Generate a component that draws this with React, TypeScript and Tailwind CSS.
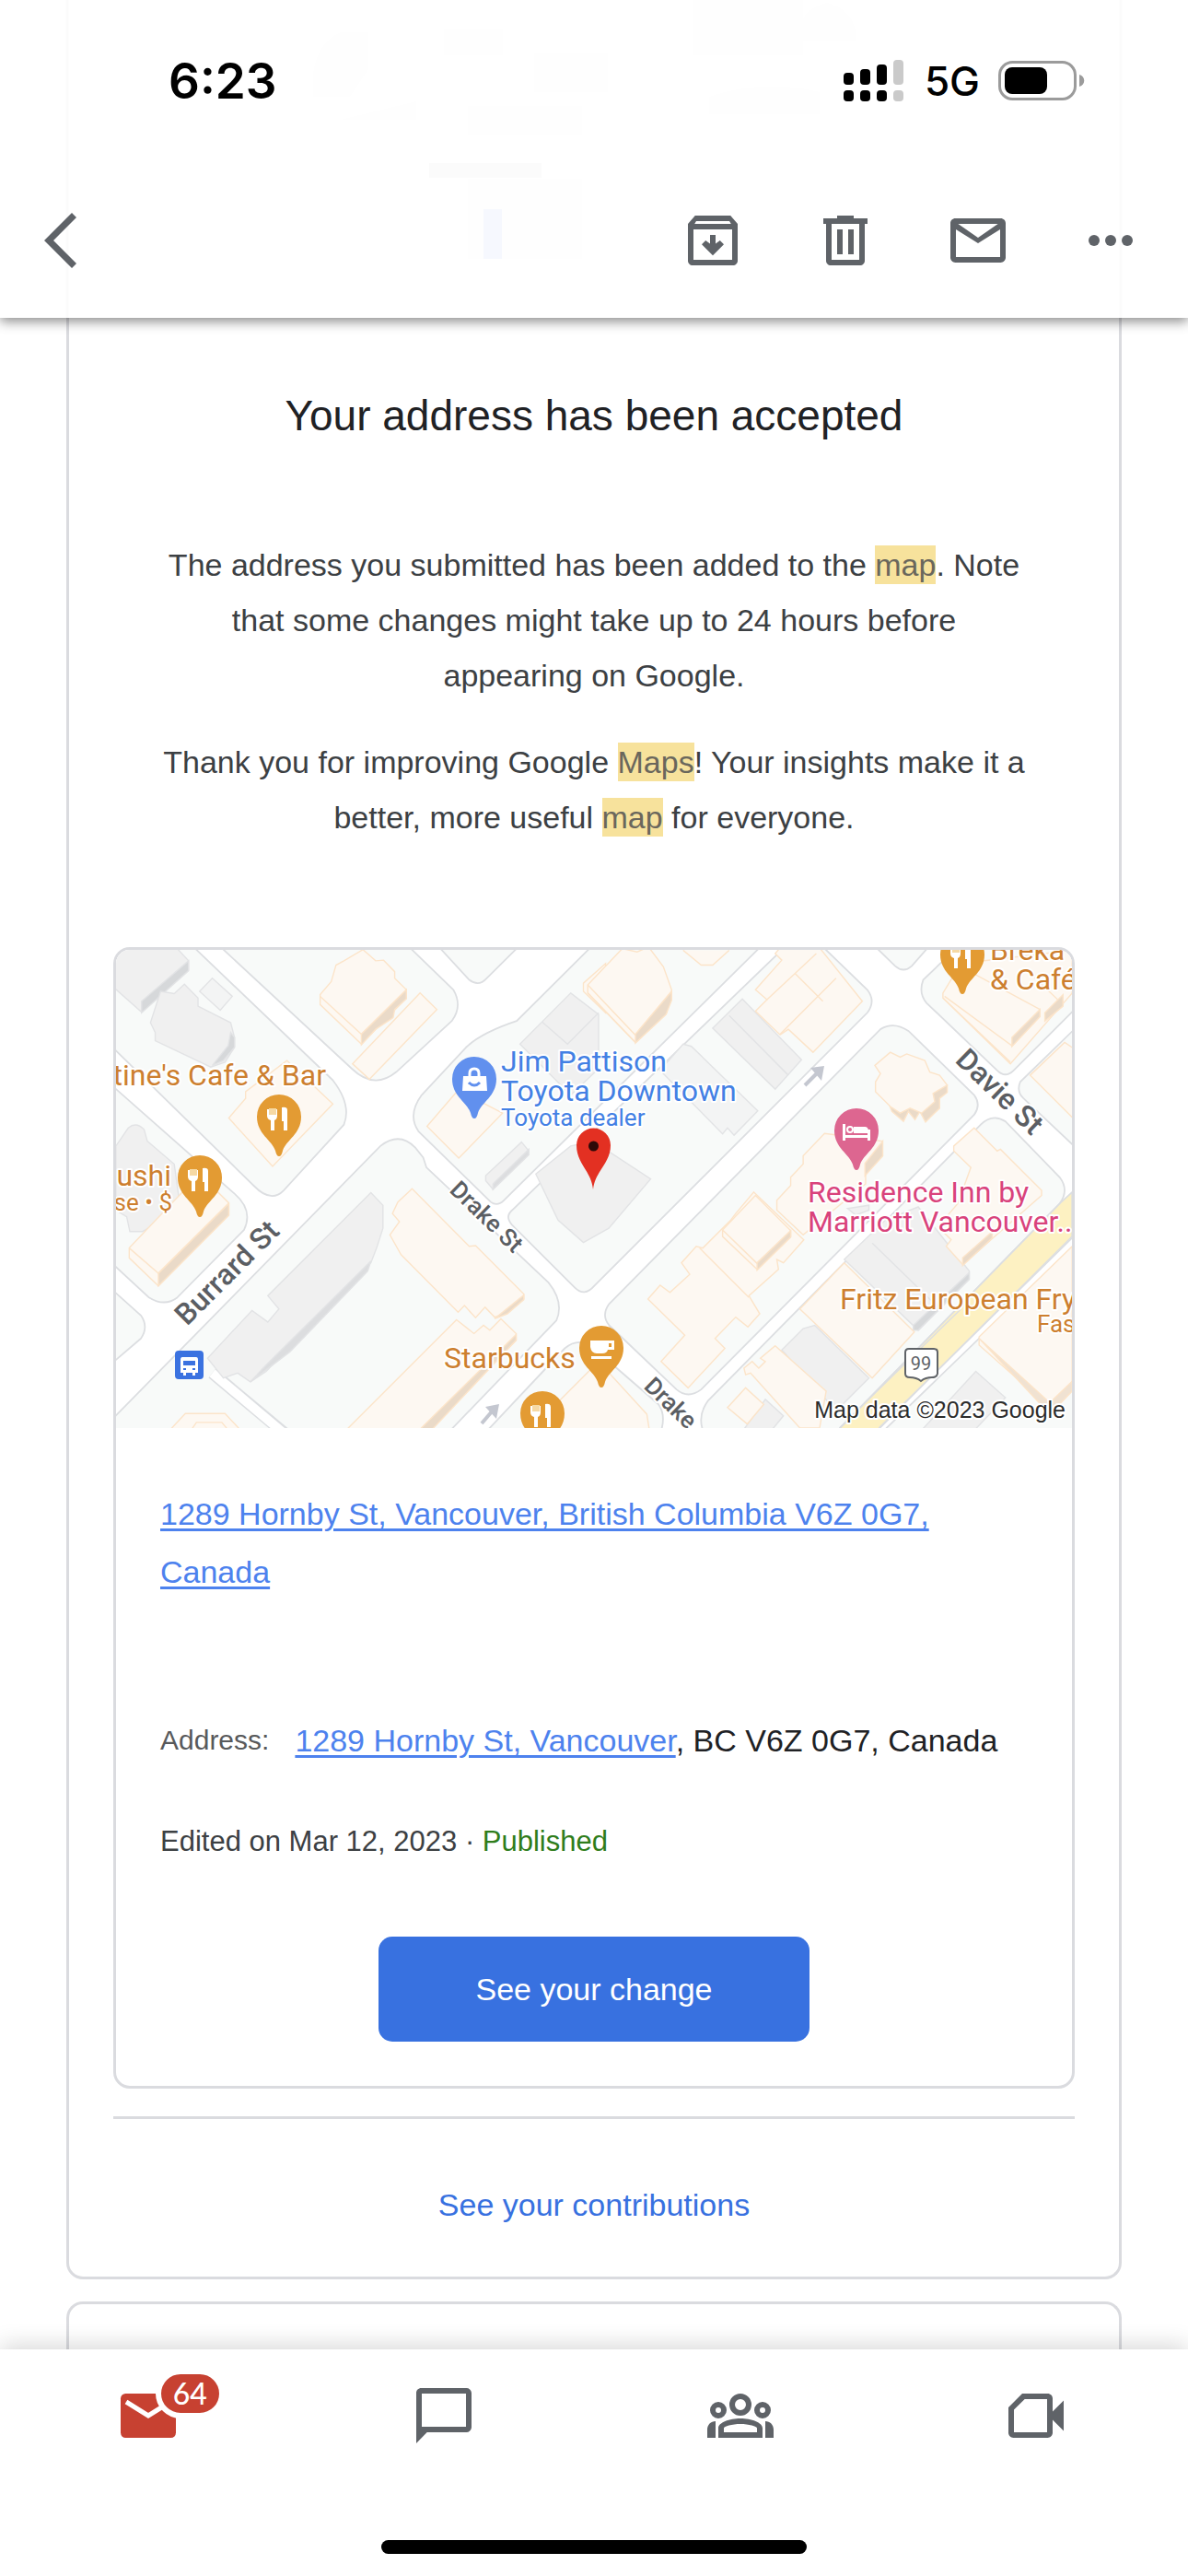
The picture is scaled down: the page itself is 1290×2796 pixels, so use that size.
import type { ReactNode } from "react";

const ICON = "h-[72px] w-[72px] fill-[#5f6368]";

function StatusBar() {
  return (
    <div className="flex items-center justify-between pt-[56px] pr-[112px] pl-[183px]">
      <span className="font-['Inter',sans-serif] text-[53px] leading-[64px] font-semibold text-black">6:23</span>
      <div className="flex items-center">
        <svg viewBox="0 0 66 46" className="h-[46px] w-[66px]" aria-label="Signal strength">
          <g fill="#000">
            <rect x="0" y="14" width="11" height="13" rx="4" />
            <rect x="18" y="10" width="11" height="17" rx="4" />
            <rect x="36" y="5" width="11" height="22" rx="4" />
            <rect x="0" y="33" width="11" height="12" rx="4" />
            <rect x="18" y="33" width="11" height="12" rx="4" />
            <rect x="36" y="33" width="11" height="12" rx="4" />
          </g>
          <g fill="#cacaca">
            <rect x="54" y="0" width="11" height="27" rx="4" />
            <rect x="54" y="33" width="11" height="12" rx="4" />
          </g>
        </svg>
        <span className="ml-[22px] font-['Inter',sans-serif] text-[44px] leading-[64px] font-medium text-black">5G</span>
        <svg viewBox="0 0 94 44" className="ml-5 h-[44px] w-[94px]" aria-label="Battery">
          <rect x="1.5" y="1.5" width="82" height="40" rx="14" fill="none" stroke="#9b9b9b" strokeWidth="3" />
          <rect x="7" y="7" width="46" height="29" rx="8" fill="#000" />
          <path d="M88 15c7 2 7 11 0 13z" fill="#9b9b9b" />
        </svg>
      </div>
    </div>
  );
}

function Toolbar() {
  return (
    <div className="flex items-center justify-between pt-[105px] pr-[48px] pb-[48px] pl-[36px]">
      <button aria-label="Back">
        <svg viewBox="0 0 72 72" className={ICON}>
          <path d="M42 6l5 5-25 25 25 25-5 5L12 36z" />
        </svg>
      </button>
      <div className="flex gap-[72px]">
        <button aria-label="Archive">
          <svg viewBox="0 0 24 24" className={ICON}>
            <path
              fillRule="evenodd"
              d="M5.6 3h12.8L21 6v13.3c0 .95-.75 1.7-1.7 1.7H4.7C3.75 21 3 20.250 3 19.300V6zM6 5l-.6 1h13.200L18 5zM5 8v11h14V8zM11 10h2v3.200l1.600-1.200L16 13.400l-4 4-4-4 1.400-1.400L11 13.200z"
            />
          </svg>
        </button>
        <button aria-label="Delete">
          <svg viewBox="0 0 24 24" className={ICON}>
            <path
              fillRule="evenodd"
              d="M9 3h6v1h5v2h-1v13.300c0 .95-.75 1.700-1.700 1.700H6.700C5.750 21 5 20.250 5 19.300V6H4V4h5zM7 6v13h10V6zM9 8h2v9H9zM13 8h2v9h-2z"
            />
          </svg>
        </button>
        <button aria-label="Mark as unread">
          <svg viewBox="0 0 24 24" className={ICON}>
            <path
              fillRule="evenodd"
              d="M3.800 4h16.400C21.200 4 22 4.800 22 5.800v12.400c0 1-.8 1.800-1.800 1.800H3.800C2.800 20 2 19.200 2 18.200V5.800C2 4.800 2.800 4 3.800 4zM4.800 6L12 11l7.200-5zM4 8v10h16V8l-8 5z"
            />
          </svg>
        </button>
        <button aria-label="More options">
          <svg viewBox="0 0 24 24" className={ICON}>
            <circle cx="6" cy="12" r="2" />
            <circle cx="12" cy="12" r="2" />
            <circle cx="18" cy="12" r="2" />
          </svg>
        </button>
      </div>
    </div>
  );
}

function HeaderBackdrop() {
  return (
    <svg viewBox="0 0 1290 345" preserveAspectRatio="none" className="absolute inset-0 h-full w-full" aria-hidden="true">
      <g fill="#fefefe">
        <path d="M340 80q5-35 30-45h30v40l-20 30h-40zM482 32h64v28h-64zM580 57h80v43h-80zM752 0h120v60H752zM866 45q0-35 32-42 32 8 32 42zM508 115h124v32H508zM508 194h124v87H508zM770 105q60-20 120-5v24H770zM370 130h82v-20" />
      </g>
      <rect x="466" y="177" width="122" height="16" fill="#fbfbfb" />
      <rect x="525" y="227" width="20" height="54" fill="#f6f8fe" />
      <path d="M73 0v345M1217 0v345" stroke="#fbfbfb" strokeWidth="3" />
    </svg>
  );
}

const PIN = "M0 43C-2 43-3 41-4 37-8 25-24 19-24 0A24 24 0 0 1 24 0C24 19 8 25 4 37 3 41 2 43 0 43z";

function FoodPin({ x, y }: { x: number; y: number }) {
  return (
    <g transform={`translate(${x} ${y})`}>
      <path d={PIN} fill="#e39b33" />
      <path d="M-13-8h11v7q0 4-3 5v11h-4V4q-4-1-4-5zM3-10q6-1 6 3v22H5V5H3z" fill="#fff" />
      <rect x="-11" y="-9" width="8" height="7" fill="#f6d9a4" />
    </g>
  );
}

function MapPicture() {
  const halo = { paintOrder: "stroke" as const, stroke: "#fff", strokeWidth: 4, strokeLinejoin: "round" as const };
  return (
    <svg viewBox="0 0 1038 519" className="block w-full rounded-t-[15px]" role="img" aria-label="Map of 1289 Hornby St, Vancouver">
      <rect width="1038" height="519" fill="#fff" />

      {/* city blocks, western half */}
      <g transform="translate(-16 -21) scale(.3444 .3571)" fill="#f8faf9" stroke="#dcdee1" strokeWidth="5">
        <path d="M30 40H280L730 455Q790 530 765 590L575 790Q535 830 480 775L30 350z" />
        <path d="M30 468L420 800Q480 850 450 910L240 1115Q200 1145 150 1115L30 1008z" />
        <path d="M30 1088L125 1170Q150 1205 125 1240L30 1318z" />
        <path d="M365 40L790 420Q860 485 930 430L1105 275Q1140 230 1110 180L960 40z" />
        <path d="M1055 40L1160 150Q1190 172 1215 145L1325 40z" />
        <path d="M30 1490L880 655Q940 610 990 660L1015 690 1025 720 1410 1070Q1460 1130 1435 1185L1090 1530H30z" />
      </g>

      {/* city blocks, eastern half */}
      <g transform="translate(514 -21) scale(.3571)" fill="#f8faf9" stroke="#dcdee1" strokeWidth="5">
        <path d="M15 40L-221 275Q-327 310-375 355L-510 500Q-554 560-520 610L-300 825Q-280 840-260 820L530 40z" />
        <path d="M605 40L-235 850Q-258 870-235 895L-45 1085Q-15 1115 15 1080L845 250Q872 215 845 180L700 40z" />
        <path d="M885 300Q925 275 970 305L1170 500Q1192 530 1170 560L340 1395Q300 1425 265 1395L60 1200Q35 1170 60 1135z" />
        <path d="M1190 590Q1225 555 1265 580L1430 750Q1460 790 1430 830L745 1530H350Q325 1480 360 1430z" />
        <path d="M1490 945L885 1530H1490z" />
        <path d="M1130 40L1015 150Q1000 190 1025 220L1240 425Q1265 450 1290 425L1490 225V40z" />
        <path d="M1490 285L1310 460Q1298 490 1320 510L1490 670z" />
        <path d="M860 40L930 108Q955 130 980 108L1040 40z" />
        <path d="M-320 1530L-75 1270Q-40 1240 0 1258L210 1440Q235 1475 215 1530z" />
        <path d="M1435 825L1468 795V930L865 1530H745z" fill="#fdf1c2" />
      </g>

      {/* buildings, western half */}
      <g transform="translate(-16 -21) scale(.3444 .3571)" strokeWidth="4">
        <path d="M350 1345L580 1530" stroke="#dcdee1" strokeWidth="38" />
        <path d="M350 1345L590 1540" stroke="#fff" strokeWidth="28" />
        <g fill="#f0f0f0" stroke="#e2e3e5">
          <path d="M30 40H225L275 92V120L127 248 30 165z" />
          <path d="M275 92V122L127 250V215z" fill="#d6d8da" />
          <path d="M187 185L230 192 262 163 305 205V230L408 280 420 325V355L390 400 345 415 170 335V310L155 280z" />
          <path d="M408 310L420 325V355L385 395 350 410 400 350z" fill="#d6d8da" />
          <path d="M350 145L413 200 375 242 310 185z" fill="#f3f4f4" />
          <path d="M46 655L85 600Q110 580 135 605L145 640 230 710 250 850 130 915H90L80 870 46 850z" />
          <path d="M850 797L888 835V905L868 965 850 1010 520 1340 470 1372 430 1345 385 1360 335 1300 475 1155 525 1190 560 1150 525 1110z" />
          <path d="M850 1005L840 1035 595 1280 470 1372 515 1325z" fill="#dcdddf" />
          <path d="M1325 643L1348 670 1235 787 1212 760V745z" />
          <path d="M1348 665V682L1235 787V770z" fill="#dcdddf" />
          <path d="M1480 190L1568 255V420L1480 500 1320 345z" />
          <path d="M1390 278L1470 345 1568 250" fill="none" />
          <path d="M1370 740L1480 655 1550 640 1732 755 1600 905 1520 948 1440 880z" />
        </g>
        <g fill="#fdf8f2" stroke="#fce4c9">
          <path d="M825 58L865 92 890 90 925 125V145L962 180V205L820 345 690 225V195L725 155 740 105 765 92z" />
          <path d="M690 200L820 315 962 180" fill="none" />
          <path d="M962 180V207L925 240 920 265 865 300 820 347V315z" fill="#eadac8" />
          <path d="M1005 190L1058 240 845 452 792 405z" />
          <path d="M585 395L730 527 540 717 402 570 455 510V490z" />
          <path d="M310 740L402 828V865L180 1080 88 995V965z" />
          <path d="M402 830V865L180 1080V1042z" fill="#eadac8" />
          <path d="M88 965L180 1042 402 828" fill="none" />
          <path d="M980 785L1160 960 1180 958 1332 1105V1120L1280 1162 1240 1175 1210 1145 1180 1177 1145 1140 1125 1160 945 985 910 925 940 885 918 860 935 825z" />
          <path d="M1332 1108V1122L1280 1165 1240 1180z" fill="#eadac8" />
          <path d="M1120 1183L1175 1225 1205 1200 1225 1215 1260 1180 1308 1225V1245L1010 1530H760z" />
          <path d="M1308 1228V1245L1030 1530H990z" fill="#eadac8" />
          <path d="M205 1530L265 1468H390L450 1530M275 1530L300 1495H380L410 1530" />
          <path d="M1125 485L1265 555 1127 692 1027 595z" />
          <path d="M1568 1310L1340 1530H1730L1720 1470z" />
          <path d="M1590 100L1520 160V185L1590 250z" />
        </g>
      </g>

      {/* buildings, eastern half */}
      <g transform="translate(514 -21) scale(.3571)" strokeWidth="4">
        <g fill="#f0f0f0" stroke="#e2e3e5">
          <path d="M465 208L645 393 565 482 375 297z" />
          <path d="M425 258L605 440" />
          <path d="M285 345L310 352 512 548 440 622 420 600 405 618 215 425z" fill="#f3f4f4" />
          <path d="M1000 840L1155 1035V1060L1000 1215 775 1000 900 880z" />
          <path d="M860 950L1060 1145" />
          <path d="M1155 1040V1060L1000 1215 985 1215V1200z" fill="#d6d8da" />
          <path d="M685 1200L850 1360 750 1460 585 1275 650 1210z" />
          <path d="M535 1425L590 1475 545 1530H460z" />
          <path d="M1175 1340L1265 1420 1160 1530H1000z" />
          <path d="M785 845L850 835V850L810 865z" />
        </g>
        <g fill="#fdf8f2" stroke="#fce4c9">
          <path d="M100 55L145 65 180 50 225 110 250 180V210L235 225V250L140 340-5 190V165z" />
          <path d="M-5 165L140 318 250 185M-5 190L140 340" fill="none" />
          <path d="M250 185V212L233 255 140 342V315z" fill="#eadac8" />
          <path d="M285 60L340 105H375L425 60" />
          <path d="M565 70L590 40H690L830 215 680 370 605 300 580 317 505 245 540 210 505 180 585 90z" />
          <path d="M540 210L690 70M625 130L710 215M580 315L750 145" fill="none" />
          <path d="M1130 100L1468 60V190L1280 405 1075 205V190z" />
          <path d="M1130 110L1370 240V260L1285 350 1080 200M1075 205L1280 400M1340 130L1440 225 1385 270" />
          <path d="M1370 240V262L1285 352V325zM1440 195V230L1385 275V250z" fill="#eadac8" />
          <path d="M1445 340L1490 370V590L1340 440z" />
          <path d="M1088 470V492L1065 510V540L1022 582 1005 550 990 575 970 550 955 580 920 550 900 500z" fill="#eadac8" />
          <path d="M915 370L945 385 965 375 1020 395 1035 430 1065 440 1088 470 1045 495 1050 520 1010 555 975 540 945 555 915 535 870 490V460L885 435 868 410z" />
          <path d="M715 617L890 640V680L840 740V770L650 925 570 850V820L612 775V750L650 710V685z" />
          <path d="M892 640V685L838 745V708z" fill="#eadac8" />
          <path d="M500 795L652 940 590 1010 570 1000 575 1030 485 1110 518 1165 482 1205 445 1175 382 1240 412 1270 300 1390 218 1310 290 1230 178 1120 215 1078 245 1100 305 1045 280 1010 325 960 345 965 430 880 445 860z" />
          <path d="M505 805L612 912V930L510 1030 405 930V910zM335 965L485 1115M405 910L510 1012" />
          <path d="M612 912V932L510 1032V1010z" fill="#eadac8" />
          <path d="M1170 600L1240 670 1250 665 1375 790V805L1135 1015 1085 960 1100 940 1060 900 1120 830 1160 720 1108 670V655z" />
          <path d="M1225 915V935L1135 1018V995z" fill="#eadac8" />
          <path d="M775 1010L988 1220 860 1360 640 1150z" />
          <path d="M565 1262L720 1400 700 1512H640L490 1345 475 1350 470 1330 495 1310 515 1330 535 1310 520 1300zM475 1390L530 1440 480 1500 420 1450z" />
          <path d="M1468 960V1390L1400 1450 1185 1260V1235z" />
          <path d="M1185 1240L1400 1435 1468 1370V1400L1400 1470z" fill="#f0e2d2" />
        </g>
        <path d="M1130 1150L760 1512M1468 935L880 1512" stroke="#dcdee1" strokeWidth="4" />
      </g>

      {/* one-way arrows */}
      <g fill="none" stroke="#c4c7d0" strokeWidth="4">
        <path d="M748 147L762 133" />
        <path d="M397 514L409 500" />
      </g>
      <path d="M754 128L769 126 766 142zM401 496L416 493 413 509z" fill="#c4c7d0" />

      {/* pins */}
      <FoodPin x={177} y={181} />
      <FoodPin x={91} y={247} />
      <FoodPin x={463} y={503} />
      <FoodPin x={919} y={5} />
      <g transform="translate(527 432)">
        <path d={PIN} fill="#e39b33" />
        <path d="M-12-8h26v10h-7q-1 4-6 4h-6q-6 0-7-7zM-11 9h22v3h-22z" fill="#fff" />
        <path d="M8-5h3v4H8z" fill="#e39b33" />
      </g>
      <g transform="translate(389 140)">
        <path d={PIN} fill="#6190ee" />
        <path d="M-12-3h25l1 16h-27z" fill="#fff" />
        <path d="M-5-2v-4q0-5 5-5t5 5v4" fill="none" stroke="#fff" strokeWidth="3" />
        <path d="M-6 4q6 6 12 0" fill="none" stroke="#6190ee" strokeWidth="3" />
      </g>
      <g transform="translate(804 196)">
        <path d={PIN} fill="#dd6690" />
        <path d="M-15-7h3V5h24v-6h3v12h-3V8h-24v3h-3zM-3-4h12q4 0 4 5v2H-3z" fill="#fff" />
        <circle cx="-7" cy="-1" r="3" fill="none" stroke="#fff" strokeWidth="2" />
      </g>
      <path d="M518 260C516 240 500 232 500 212A18.500 18.500 0 0 1 537 212C537 232 520 240 518 260z" fill="#e33022" />
      <circle cx="518.500" cy="213" r="5.500" fill="#2d0a08" />

      {/* bus stop */}
      <rect x="64" y="435" width="31" height="31" rx="4" fill="#3b72e0" />
      <path d="M72 442h15q2 0 2 3v14h-3v3h-3v-3h-7v3h-3v-3h-3v-14q0-3 2-3z" fill="#fff" />
      <path d="M73 446h13v5H73zM73 454h3v2h-3zM83 454h3v2h-3z" fill="#3b72e0" />

      {/* highway shield */}
      <path d="M861 433h27q4 0 4 4v23q-1 4-6 4-7 0-12 4-5-4-12-4-5 0-5-4v-23q0-4 4-4z" fill="#fff" stroke="#5f6368" strokeWidth="2" />

      <g fontFamily="Roboto, sans-serif" fontSize="32" {...halo}>
        <text x="874" y="456" textAnchor="middle" fontSize="20" fill="#5f6368">99</text>
        <g fill="#cd7f2f">
          <text x="228" y="147" textAnchor="end">tine's Cafe &amp; Bar</text>
          <text x="60" y="256" textAnchor="end">ushi</text>
          <text x="61" y="283" textAnchor="end" fontSize="26">se • $</text>
          <text x="356" y="454">Starbucks</text>
          <text x="786" y="390">Fritz European Fry</text>
          <text x="1000" y="415" fontSize="26">Fas</text>
          <text x="949" y="11">Breka</text>
          <text x="949" y="43">&amp; Café</text>
        </g>
        <g fill="#4380e4">
          <text x="418" y="132">Jim Pattison</text>
          <text x="418" y="164">Toyota Downtown</text>
          <text x="418" y="191" fontSize="26">Toyota dealer</text>
        </g>
        <g fill="#d9437c">
          <text x="751" y="274">Residence Inn by</text>
          <text x="751" y="306">Marriott Vancouver..</text>
        </g>
        <g fill="#5b5e63" fontWeight="500">
          <text transform="translate(77 409) rotate(-45)" fontSize="32">Burrard St</text>
          <text transform="translate(361 262) rotate(44)" fontSize="26">Drake St</text>
          <text transform="translate(910 121) rotate(44)" fontSize="32">Davie St</text>
          <text transform="translate(572 475) rotate(44)" fontSize="26">Drake</text>
        </g>
        <text x="1031" y="508" textAnchor="end" fontFamily="Liberation Sans, sans-serif" fontSize="25" fill="#2c2c2c">
          Map data ©2023 Google
        </text>
      </g>
    </svg>
  );
}

function Hit({ children }: { children: ReactNode }) {
  return <mark className="bg-[#f7e29c] py-[2px] text-[#6a675c]">{children}</mark>;
}

const LINK = "text-[#4d82ee] underline decoration-[3px] underline-offset-[4px]";

function PlaceCard() {
  return (
    <section className="mt-[111px] rounded-[18px] border-[3px] border-[#dadbdf]">
      <MapPicture />
      <div className="px-[48px] pt-[62px] pb-[48px]">
        <a href="#place" className={`block text-[34px] leading-[63px] ${LINK}`}>
          1289 Hornby St, Vancouver, British Columbia V6Z 0G7, Canada
        </a>
        <div className="mt-[121px] flex items-center gap-7 leading-[60px]">
          <span className="text-[30px] text-[#58595b]">Address:</span>
          <span className="text-[34px] text-[#202124]">
            <a href="#address" className={LINK}>1289 Hornby St, Vancouver</a>, BC V6Z 0G7, Canada
          </span>
        </div>
        <p className="mt-[60px] text-[31px] leading-[40px]">
          Edited on Mar 12, 2023 · <span className="text-[#2f7d1b]">Published</span>
        </p>
        <div className="mt-[83px] flex justify-center">
          <button className="w-[468px] rounded-[15px] bg-[#3871e0] py-[27px] text-[34px] leading-[60px] text-white">
            See your change
          </button>
        </div>
      </div>
    </section>
  );
}

function BottomNav() {
  return (
    <nav className="relative z-10 bg-white pt-9 pb-6 shadow-[0_-4px_24px_rgba(0,0,0,0.16)]">
      <div className="grid grid-cols-4 justify-items-center pr-1">
        <button aria-label="Mail, 64 unread" className="relative">
          <svg viewBox="0 0 24 24" className="h-[72px] w-[72px]">
            <rect x="2" y="4" width="20" height="16" rx="1.800" fill="#c74131" />
            <path d="M4 7l8 5 8-5" fill="none" stroke="#fff" strokeWidth="1.700" />
          </svg>
          <span className="absolute -top-[15px] left-[44px] rounded-full border-[6px] border-white bg-[#c74131] px-[13px] font-['Lato',sans-serif] text-[32px] leading-[42px] font-medium text-white">
            64
          </span>
        </button>
        <button aria-label="Chat">
          <svg viewBox="0 0 24 24" className={ICON}>
            <path fillRule="evenodd" d="M3.800 2h16.400c1 0 1.800.8 1.800 1.800v12.400c0 1-.8 1.800-1.800 1.800H5.900L2 22V3.800C2 2.800 2.800 2 3.800 2zM4 4v12h16V4z" />
          </svg>
        </button>
        <button aria-label="Spaces">
          <svg viewBox="0 0 24 24" className={ICON}>
            <path
              fillRule="evenodd"
              d="M12 4a4 4 0 1 1 0 8 4 4 0 0 1 0-8zm0 2a2 2 0 1 0 0 4 2 2 0 0 0 0-4zM4 7a3 3 0 1 1 0 6 3 3 0 0 1 0-6zm0 2a1 1 0 1 0 0 2 1 1 0 0 0 0-2zM20 7a3 3 0 1 1 0 6 3 3 0 0 1 0-6zm0 2a1 1 0 1 0 0 2 1 1 0 0 0 0-2zM4 20v-3.500C4 14.500 8 13 12 13s8 1.500 8 3.500V20zm2-2h12v-1.500c0-.6-3-1.500-6-1.500s-6 .9-6 1.500zM0 20v-2.900C0 15.300 1.300 14 3 14v6zM24 20v-2.900c0-1.800-1.300-3.100-3-3.100v6z"
            />
          </svg>
        </button>
        <button aria-label="Meet">
          <svg viewBox="0 0 24 24" className={ICON}>
            <path
              fillRule="evenodd"
              d="M7 4h9.200C17.200 4 18 4.800 18 5.800v4.700l4-4v11l-4-4v4.700c0 1-.8 1.800-1.800 1.800H3.800C2.800 20 2 19.200 2 18.200V9zm.9 2L4 9.800V18h12V6z"
            />
          </svg>
        </button>
      </div>
      <div className="mx-auto mt-[99px] h-[15px] w-[462px] rounded-full bg-black" />
    </nav>
  );
}

export default function App() {
  return (
    <div className="flex min-h-screen flex-col bg-white font-['Liberation_Sans',Arial,sans-serif] text-[#3c4043]">
      <header className="relative z-10 bg-white shadow-[0_4px_12px_rgba(0,0,0,0.45)]">
        <HeaderBackdrop />
        <div className="relative">
          <StatusBar />
          <Toolbar />
        </div>
      </header>

      <main className="flex grow flex-col gap-6 px-[72px]">
        <article className="rounded-b-[18px] border-[3px] border-t-0 border-[#dadbdf] px-[48px] pt-[76px] pb-[48px]">
          <h1 className="text-center text-[46px] leading-[60px] text-[#202124]">Your address has been accepted</h1>
          <div className="mt-[102px] flex flex-col gap-[34px] px-[52px] text-center text-[34px] leading-[60px]">
            <p>
              The address you submitted has been added to the <Hit>map</Hit>. Note that some changes might take up to 24
              hours before appearing on Google.
            </p>
            <p>
              Thank you for improving Google <Hit>Maps</Hit>! Your insights make it a better, more useful <Hit>map</Hit>{" "}
              for everyone.
            </p>
          </div>
          <PlaceCard />
          <hr className="mt-[30px] border-t-[3px] border-[#dadbdf]" />
          <p className="mt-[63px] text-center text-[34px] leading-[60px]">
            <a href="#contributions" className="text-[#3871e0]">See your contributions</a>
          </p>
        </article>
        <article className="grow rounded-t-[18px] border-[3px] border-b-0 border-[#dadbdf]" />
      </main>

      <BottomNav />
    </div>
  );
}
